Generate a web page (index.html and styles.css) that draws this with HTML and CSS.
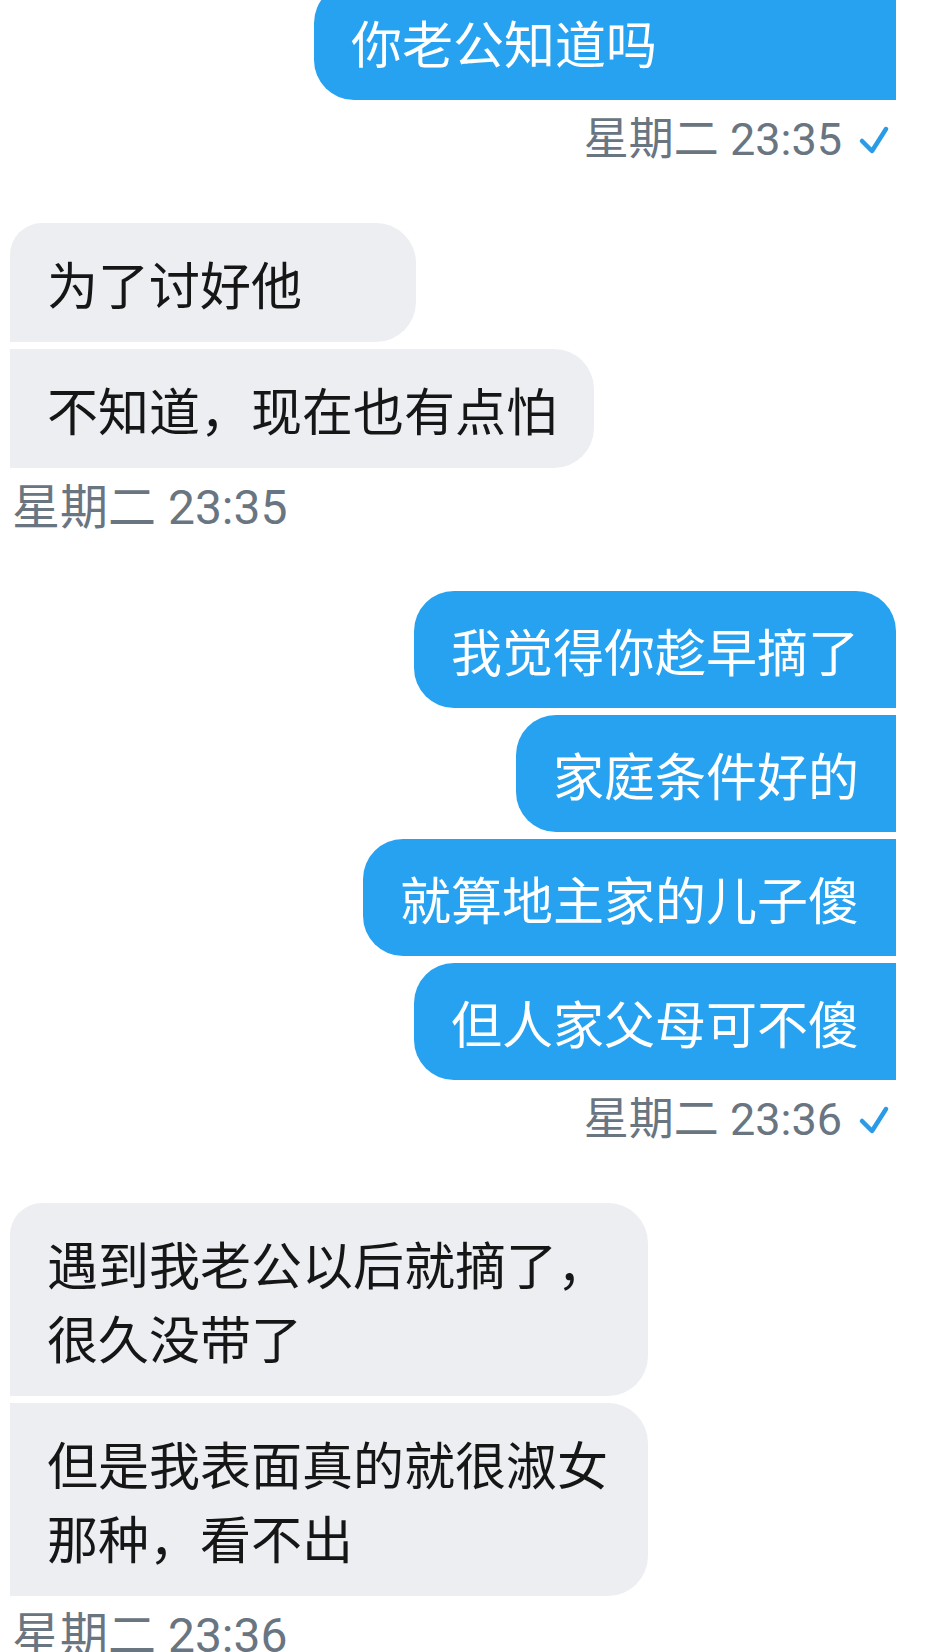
FILE: index.html
```html
<!DOCTYPE html>
<html lang="zh-CN">
<head>
  <meta charset="UTF-8">
  <meta name="viewport" content="width=device-width, initial-scale=1.0">
  <title>聊天记录</title>
  <link rel="stylesheet" href="styles.css">
</head>
<body>
  <div class="chat">
    <!-- 上一屏延续下来的气泡，只露出最后一行 -->
    <div class="msg out cut">你老公知道吗</div>
    <div class="meta out">
      <span>星期二 23:35</span>
      <svg class="tick" viewBox="0 0 32 32" width="32" height="32"><path d="M4 17 L14 27 L28 5"/></svg>
    </div>

    <div class="msg in first">为了讨好他</div>
    <div class="msg in">不知道，现在也有点怕</div>
    <div class="meta in"><span>星期二 23:35</span></div>

    <div class="msg out first">我觉得你趁早摘了</div>
    <div class="msg out">家庭条件好的</div>
    <div class="msg out">就算地主家的儿子傻</div>
    <div class="msg out">但人家父母可不傻</div>
    <div class="meta out">
      <span>星期二 23:36</span>
      <svg class="tick" viewBox="0 0 32 32" width="32" height="32"><path d="M4 17 L14 27 L28 5"/></svg>
    </div>

    <div class="msg in first">遇到我老公以后就摘了，很久没带了</div>
    <div class="msg in">但是我表面真的就很淑女那种，看不出</div>
    <div class="meta in"><span>星期二 23:36</span></div>
  </div>
</body>
</html>
```

FILE: styles.css
```css
body {
  margin: 0;
  height: 1652px;
  overflow: hidden;
  background-color: #fff;
  font-family: "Noto Sans CJK SC", sans-serif;
}
.chat {
  display: flex;
  flex-direction: column;
  gap: 7px;
  margin-top: -17px;
  padding: 0 36px 0 10px;
}
.msg {
  box-sizing: border-box;
  max-width: 638px;
  padding: 22.5px 37px;
  font-size: 51px;
  line-height: 74px;
}
.msg.out {
  align-self: flex-end;
  padding-top: 21.5px;
  padding-bottom: 21.5px;
  background-color: #27a2f1;
  color: #fff;
  border-radius: 40px 0 0 40px;
}
.msg.out.first {
  border-top-right-radius: 40px;
}
.msg.out.cut {
  width: 582px;
}
.msg.in {
  align-self: flex-start;
  min-width: 406px;
  background-color: #eceef2;
  color: #161616;
  border-radius: 0 40px 40px 0;
}
.msg.in.first {
  border-top-left-radius: 32px;
}
.meta {
  display: flex;
  align-items: center;
  gap: 16px;
  margin: 3px 0 46px;
  font-family: Roboto, "Noto Sans CJK SC", sans-serif;
  font-size: 45px;
  line-height: 60px;
  color: #6a7582;
}
.meta.out {
  align-self: flex-end;
  padding-right: 6px;
}
.meta.in {
  align-self: flex-start;
  padding-left: 2px;
  font-size: 48px;
}
.tick {
  fill: none;
  stroke: #2a9be6;
  stroke-width: 4.5;
  stroke-linecap: round;
  stroke-linejoin: round;
}
```
